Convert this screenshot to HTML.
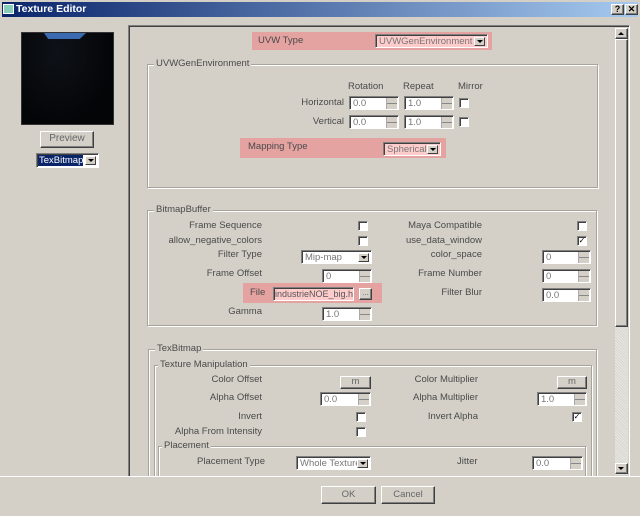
<!DOCTYPE html>
<html><head><meta charset="utf-8"><style>
*{box-sizing:border-box;margin:0;padding:0}
body{width:640px;height:516px;background:#d4d0c8;font-family:"Liberation Sans",sans-serif;font-size:9.5px;color:#4a4a4a;position:relative;overflow:hidden}
.a{position:absolute}
.t{position:absolute;white-space:nowrap;line-height:12px}
.r{text-align:right}
.grp{position:absolute;border:1px solid #a8a49c;box-shadow:inset 1px 1px 0 #fff,1px 1px 0 #fff}
.gl{position:absolute;top:-7px;left:6px;background:#d4d0c8;padding:0 2px;line-height:12px;white-space:nowrap}
.inp{position:absolute;background:#fff;border:1px solid;border-color:#808080 #fff #fff #808080;box-shadow:inset 1px 1px 0 #404040;height:14px;line-height:13px;padding-left:3px;color:#777;overflow:hidden;white-space:nowrap}
.spn{position:absolute;right:1px;top:1px;width:11px;height:11px;background:#d4d0c8;border-left:1px solid #aaa}
.spn:after{content:"";position:absolute;left:0;right:0;top:5px;border-top:1px solid #888}
.dd{position:absolute;right:2px;top:2px;width:11px;height:9px;background:#d4d0c8;border:1px solid;border-color:#fff #404040 #404040 #fff}
.dd:after{content:"";position:absolute;left:2px;top:2px;border:3px solid transparent;border-top:3px solid #000}
.cb{position:absolute;width:10px;height:10px;background:#fff;border:1px solid;border-color:#808080 #fff #fff #808080;box-shadow:inset 1px 1px 0 #404040;font-size:8px;line-height:8px;color:#000;text-align:center}
.btn{position:absolute;background:#d4d0c8;border:1px solid;border-color:#fff #404040 #404040 #fff;box-shadow:inset -1px -1px 0 #808080;text-align:center;color:#666}
.pink{position:absolute;background:#e4a3a0}
</style></head><body>
<div class="a" style="left:2px;top:2px;width:636px;height:15px;background:linear-gradient(90deg,#0a246a,#a6caf0)"></div>
<div class="a" style="left:3px;top:4px;width:11px;height:10px;background:#8cb;border:1px solid #fff"></div>
<div class="t" style="left:16px;top:3px;color:#fff;font-weight:bold;font-size:10.5px">Texture Editor</div>
<div class="btn" style="left:611px;top:4px;width:13px;height:11px;font-size:9px;line-height:9px;color:#000;font-weight:bold">?</div>
<div class="btn" style="left:625px;top:4px;width:13px;height:11px;font-size:9px;line-height:9px;color:#000;font-weight:bold">✕</div>

<div class="a" style="left:21px;top:32px;width:93px;height:93px;background:radial-gradient(ellipse at 40% 20%,#0e1218,#040507 70%);border:1px solid #333"></div>
<div class="a" style="left:44px;top:33px;width:42px;height:6px;background:#3a6ab0;clip-path:polygon(0 0,100% 0,85% 100%,10% 100%)"></div>
<div class="btn" style="left:40px;top:131px;width:54px;height:17px;line-height:14px;font-size:10px">Preview</div>
<div class="inp" style="left:36px;top:153px;width:63px;height:15px;padding:1px"><div style="background:#0a246a;color:#fff;width:45px;line-height:11px;padding-left:1px;overflow:hidden">TexBitmap</div><div class="dd"></div></div>

<div class="a" style="left:128px;top:25px;width:502px;height:452px;border:1px solid;border-color:#808080 #fff #fff #808080;box-shadow:inset 1px 1px 0 #404040"></div>
<div class="a" style="left:615px;top:28px;width:13px;height:447px;background:repeating-linear-gradient(45deg,#e8e6e0 0 1px,#d8d6d0 1px 2px)"></div>
<div class="btn" style="left:615px;top:28px;width:13px;height:11px"><div style="position:absolute;left:2px;top:3px;border:3px solid transparent;border-bottom:3px solid #000;border-top:0"></div></div>
<div class="btn" style="left:615px;top:39px;width:13px;height:288px"></div>
<div class="btn" style="left:615px;top:463px;width:13px;height:11px"><div style="position:absolute;left:2px;top:3px;border:3px solid transparent;border-top:3px solid #000;border-bottom:0"></div></div>

<div class="pink" style="left:252px;top:32px;width:240px;height:18px"></div>
<div class="t" style="left:258px;top:35px">UVW Type</div>
<div class="inp" style="left:375px;top:34px;width:113px;background:#fcc">UVWGenEnvironment<div class="dd"></div></div>

<div class="grp" style="left:147px;top:64px;width:451px;height:124px"><div class="gl">UVWGenEnvironment</div></div>
<div class="t" style="left:348px;top:81px">Rotation</div>
<div class="t" style="left:403px;top:81px">Repeat</div>
<div class="t" style="left:458px;top:81px">Mirror</div>
<div class="t r" style="left:280px;width:64px;top:97px">Horizontal</div>
<div class="t r" style="left:280px;width:64px;top:116px">Vertical</div>
<div class="inp" style="left:349px;top:96px;width:50px">0.0<div class="spn"></div></div>
<div class="inp" style="left:404px;top:96px;width:50px">1.0<div class="spn"></div></div>
<div class="cb" style="left:459px;top:98px"></div>
<div class="inp" style="left:349px;top:115px;width:50px">0.0<div class="spn"></div></div>
<div class="inp" style="left:404px;top:115px;width:50px">1.0<div class="spn"></div></div>
<div class="cb" style="left:459px;top:117px"></div>
<div class="pink" style="left:240px;top:138px;width:206px;height:20px"></div>
<div class="t" style="left:248px;top:141px">Mapping Type</div>
<div class="inp" style="left:383px;top:142px;width:58px;background:#fcc">Spherical<div class="dd"></div></div>

<div class="grp" style="left:147px;top:210px;width:450px;height:116px"><div class="gl">BitmapBuffer</div></div>
<div class="t r" style="left:150px;width:112px;top:220px">Frame Sequence</div>
<div class="t r" style="left:150px;width:112px;top:235px">allow_negative_colors</div>
<div class="t r" style="left:150px;width:112px;top:249px">Filter Type</div>
<div class="t r" style="left:150px;width:112px;top:268px">Frame Offset</div>
<div class="t r" style="left:150px;width:112px;top:306px">Gamma</div>
<div class="cb" style="left:358px;top:221px"></div>
<div class="cb" style="left:358px;top:236px"></div>
<div class="inp" style="left:301px;top:250px;width:71px">Mip-map<div class="dd"></div></div>
<div class="inp" style="left:322px;top:269px;width:50px">0<div class="spn"></div></div>
<div class="pink" style="left:243px;top:283px;width:139px;height:20px"></div>
<div class="t" style="left:250px;top:287px">File</div>
<div class="inp" style="left:273px;top:287px;width:81px;background:#fcc;color:#555;padding-left:1px;font-size:9px">industrieNOE_big.hdr</div>
<div class="btn" style="left:359px;top:288px;width:13px;height:12px;font-size:8px;line-height:8px">...</div>
<div class="inp" style="left:322px;top:307px;width:50px">1.0<div class="spn"></div></div>
<div class="t r" style="left:380px;width:102px;top:220px">Maya Compatible</div>
<div class="t r" style="left:380px;width:102px;top:235px">use_data_window</div>
<div class="t r" style="left:380px;width:102px;top:249px">color_space</div>
<div class="t r" style="left:380px;width:102px;top:268px">Frame Number</div>
<div class="t r" style="left:380px;width:102px;top:287px">Filter Blur</div>
<div class="cb" style="left:577px;top:221px"></div>
<div class="cb" style="left:577px;top:236px">✓</div>
<div class="inp" style="left:542px;top:250px;width:49px">0<div class="spn"></div></div>
<div class="inp" style="left:542px;top:269px;width:49px">0<div class="spn"></div></div>
<div class="inp" style="left:542px;top:288px;width:49px">0.0<div class="spn"></div></div>

<div class="grp" style="left:148px;top:349px;width:449px;height:140px"><div class="gl">TexBitmap</div></div>
<div class="grp" style="left:154px;top:365px;width:438px;height:130px"><div class="gl" style="left:3px">Texture Manipulation</div></div>
<div class="t r" style="left:150px;width:112px;top:374px">Color Offset</div>
<div class="t r" style="left:150px;width:112px;top:392px">Alpha Offset</div>
<div class="t r" style="left:150px;width:112px;top:411px">Invert</div>
<div class="t r" style="left:150px;width:112px;top:426px">Alpha From Intensity</div>
<div class="btn" style="left:340px;top:376px;width:31px;height:13px;line-height:10px">m</div>
<div class="inp" style="left:320px;top:392px;width:51px">0.0<div class="spn"></div></div>
<div class="cb" style="left:356px;top:412px"></div>
<div class="cb" style="left:356px;top:427px"></div>
<div class="t r" style="left:380px;width:98px;top:374px">Color Multiplier</div>
<div class="t r" style="left:380px;width:98px;top:392px">Alpha Multiplier</div>
<div class="t r" style="left:380px;width:98px;top:411px">Invert Alpha</div>
<div class="btn" style="left:557px;top:376px;width:30px;height:13px;line-height:10px">m</div>
<div class="inp" style="left:537px;top:392px;width:50px">1.0<div class="spn"></div></div>
<div class="cb" style="left:572px;top:412px">✓</div>
<div class="grp" style="left:158px;top:446px;width:428px;height:40px"><div class="gl" style="left:3px">Placement</div></div>
<div class="t r" style="left:160px;width:105px;top:456px">Placement Type</div>
<div class="inp" style="left:296px;top:456px;width:75px">Whole Texture<div class="dd"></div></div>
<div class="t" style="left:457px;top:456px">Jitter</div>
<div class="inp" style="left:532px;top:456px;width:51px">0.0<div class="spn"></div></div>
<div class="a" style="left:0;top:476px;width:640px;height:40px;background:#d4d0c8;border-top:1px solid #fff"></div>
<div class="btn" style="left:321px;top:486px;width:55px;height:18px;line-height:15px">OK</div>
<div class="btn" style="left:381px;top:486px;width:54px;height:18px;line-height:15px">Cancel</div>
</body></html>
